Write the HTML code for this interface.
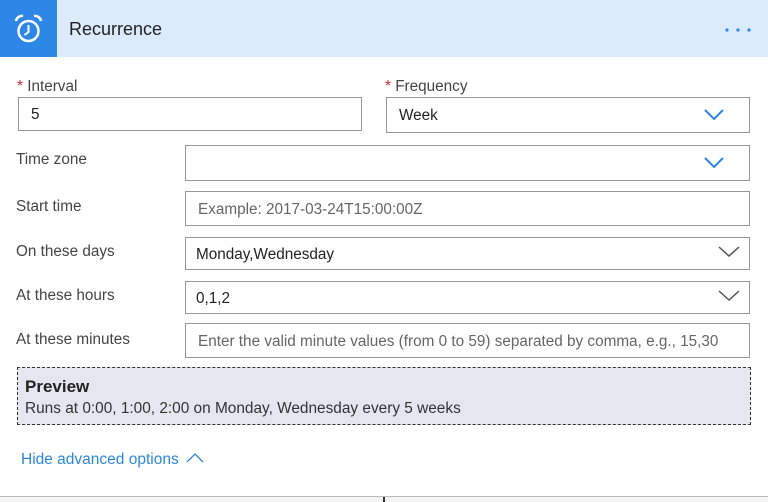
<!DOCTYPE html>
<html><head><style>
body{margin:0;width:768px;height:502px;background:#fff;font-family:"Liberation Sans",sans-serif;position:relative;overflow:hidden;color:#333}
.a{position:absolute}
.hdr{left:0;top:0;width:768px;height:57px;background:#dcebfc}
.ico{left:0;top:0;width:57px;height:57px;background:#2d87e6}
.lbl{font-size:15.3px;color:#444}
.req{color:#c4262e}
.inp{border:1px solid #999;box-sizing:border-box;background:#fff;font-size:15.3px;color:#222;padding-left:12px;display:flex;align-items:center}
.ph{color:#666}
</style></head><body>
<div class="a hdr"></div>
<div class="a ico"><svg width="57" height="57" viewBox="0 0 57 57"><circle cx="28.5" cy="31" r="10" fill="none" stroke="#fff" stroke-width="2.5"/><path d="M28.5 25v7l-4 3" fill="none" stroke="#fff" stroke-width="2"/><path d="M16 21a6 6 0 0 1 7-5M41 21a6 6 0 0 0-7-5" fill="none" stroke="#fff" stroke-width="2.5"/></svg></div>
<div class="a" style="left:69px;top:19px;font-size:18px;color:#222">Recurrence</div>
<svg class="a" style="left:724px;top:27px" width="30" height="6"><circle cx="3" cy="3" r="1.6" fill="#2d87e6"/><circle cx="14" cy="3" r="1.6" fill="#2d87e6"/><circle cx="25" cy="3" r="1.6" fill="#2d87e6"/></svg>

<div class="a lbl" style="left:17px;top:78px"><span class="req">*</span> Interval</div>
<div class="a inp" style="left:18px;top:97px;width:344px;height:34px;padding-top:2px">5</div>
<div class="a lbl" style="left:385px;top:78px"><span class="req">*</span> Frequency</div>
<div class="a inp" style="left:386px;top:97px;width:364px;height:36px;padding-top:2px">Week</div>
<svg class="a" style="left:704px;top:109px" width="20" height="12"><path d="M1 1l9 9 9-9" fill="none" stroke="#2d87e6" stroke-width="2"/></svg>

<div class="a lbl" style="left:16px;top:151px">Time zone</div>
<div class="a inp" style="left:185px;top:145px;width:565px;height:36px"></div>
<svg class="a" style="left:704px;top:157px" width="20" height="12"><path d="M1 1l9 9 9-9" fill="none" stroke="#2d87e6" stroke-width="2"/></svg>

<div class="a lbl" style="left:16px;top:198px">Start time</div>
<div class="a inp ph" style="left:185px;top:191px;width:565px;height:35px;padding-top:2px">Example: 2017-03-24T15:00:00Z</div>

<div class="a lbl" style="left:16px;top:243px">On these days</div>
<div class="a inp" style="left:185px;top:237px;width:565px;height:33px;padding-left:10px;padding-top:2px">Monday,Wednesday</div>
<svg class="a" style="left:718px;top:246px" width="22" height="12"><path d="M1 1l10 9 10-9" fill="none" stroke="#555" stroke-width="1.5"/></svg>

<div class="a lbl" style="left:16px;top:287px">At these hours</div>
<div class="a inp" style="left:185px;top:281px;width:565px;height:33px;padding-left:10px;padding-top:2px">0,1,2</div>
<svg class="a" style="left:718px;top:290px" width="22" height="12"><path d="M1 1l10 9 10-9" fill="none" stroke="#555" stroke-width="1.5"/></svg>

<div class="a lbl" style="left:16px;top:331px">At these minutes</div>
<div class="a inp ph" style="left:185px;top:323px;width:565px;height:35px;padding-top:2px">Enter the valid minute values (from 0 to 59) separated by comma, e.g., 15,30</div>

<div class="a" style="left:17px;top:367px;width:734px;height:58px;box-sizing:border-box;border:1.5px dashed #333;background:#e6e6f0"></div>
<div class="a" style="left:25px;top:377px;font-size:17px;font-weight:bold;color:#222">Preview</div>
<div class="a" style="left:25px;top:400px;font-size:15.4px;color:#333">Runs at 0:00, 1:00, 2:00 on Monday, Wednesday every 5 weeks</div>

<div class="a" style="left:21px;top:451px;font-size:15.5px;color:#2b88d8">Hide advanced options</div>
<svg class="a" style="left:186px;top:452px" width="18" height="11"><path d="M1 10l8-8 8 8" fill="none" stroke="#2b88d8" stroke-width="1.3"/></svg>

<div class="a" style="left:0;top:496px;width:768px;height:1px;background:#bbb"></div>
<div class="a" style="left:0;top:497px;width:768px;height:5px;background:#f4f4f4"></div>
<div class="a" style="left:383px;top:497px;width:2px;height:5px;background:#333"></div>
</body></html>
